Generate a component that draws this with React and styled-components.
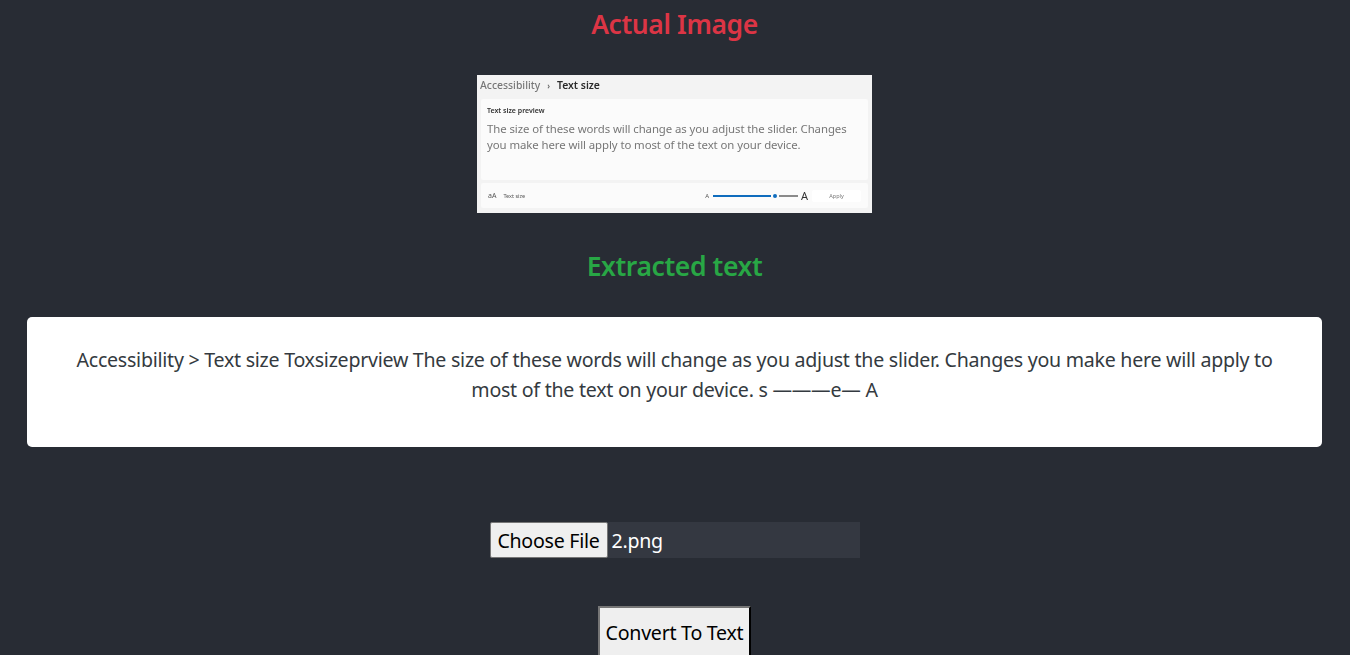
import React from 'react'
import styled, { createGlobalStyle } from 'styled-components'

const GlobalStyle = createGlobalStyle`
  html, body {
    margin: 0;
    height: 100%;
    overflow: hidden;
    background-color: #282c34;
  }
  body {
    font-family: "Noto Sans", "Open Sans", sans-serif;
  }
`

const Page = styled.div`
  width: 1349px;
  height: 655px;
  overflow: hidden;
  display: flex;
  flex-direction: column;
  align-items: center;
  background-color: #282c34;
`

const Heading = styled.h2`
  flex: none;
  margin: ${props => props.$top}px 0 0;
  font-size: 26.5px;
  line-height: 36px;
  font-weight: 600;
  letter-spacing: -0.4px;
  color: ${props => props.$color};
`

const Shot = styled.div`
  flex: none;
  margin-top: 33px;
  width: 395px;
  height: 138px;
  box-sizing: border-box;
  padding: 0 4px 5px 4px;
  display: flex;
  flex-direction: column;
  background-color: #f3f3f3;
  color: #1b1b1b;
  filter: blur(0.35px);
`

const Crumbs = styled.div`
  flex: none;
  height: 24px;
  box-sizing: border-box;
  padding-bottom: 4px;
  display: flex;
  align-items: center;
  gap: 7px;
  margin-left: -1px;
  font-size: 10.4px;
  font-weight: 600;
  color: #2b2b2b;

  span:first-child {
    font-weight: 500;
    color: #777;
  }
  span:nth-child(2) {
    font-size: 8px;
    color: #666;
  }
`

const PreviewCard = styled.div`
  flex: none;
  height: 81px;
  box-sizing: border-box;
  padding: 6px;
  background-color: #fbfbfb;
  border-radius: 2px;
`

const PreviewTitle = styled.div`
  font-size: 7px;
  line-height: 12px;
  font-weight: 600;
  color: #333;
`

const PreviewText = styled.p`
  margin: 4px 0 0;
  font-size: 11.4px;
  line-height: 16px;
  letter-spacing: -0.08px;
  color: #777;
`

const SliderCard = styled.div`
  flex: none;
  margin-top: 3px;
  height: 25px;
  box-sizing: border-box;
  padding: 0 7px 0 7px;
  display: flex;
  align-items: center;
  background-color: #fbfbfb;
  border-radius: 2px;
  font-size: 5.5px;
  color: #555;
`

const SizeGlyph = styled.span`
  font-size: 7px;
  color: #555;
`

const SizeLabel = styled.span`
  margin-left: 7px;
  flex: 1;
`

const SmallA = styled.span`
  font-size: 6px;
  margin-right: 4px;
`

const BigA = styled.span`
  font-size: 11px;
  color: #333;
  margin: 0 4px 0 3px;
`

const Track = styled.div`
  height: 2px;
  width: ${props => props.$width}px;
  background-color: ${props => props.$color};
`

const Thumb = styled.div`
  width: 4px;
  height: 4px;
  margin: 0 2px;
  border-radius: 50%;
  background-color: #0f6cbd;
`

const ApplyButton = styled.div`
  width: 49px;
  height: 12px;
  display: flex;
  align-items: center;
  justify-content: center;
  background-color: #fff;
  border-radius: 2px;
  color: #777;
`

const ResultBox = styled.div`
  flex: none;
  margin-top: 33px;
  width: 1295px;
  height: 130px;
  box-sizing: border-box;
  padding: 28px 48px;
  border-radius: 5px;
  background-color: #fff;
  color: #343a40;
  font-size: 19.6px;
  letter-spacing: -0.26px;
  line-height: 30px;
  text-align: center;
`

const FileRow = styled.div`
  flex: none;
  margin-top: 75px;
  width: 370px;
  height: 36px;
  display: flex;
  align-items: center;
  background-color: #343841;
  color: #fff;
  font-size: 19.6px;
  letter-spacing: -0.26px;
`

const FileButton = styled.button`
  height: 36px;
  width: 118px;
  padding: 0;
  margin-right: 4px;
  box-sizing: border-box;
  border: 1px solid #767676;
  border-radius: 2px;
  background-color: #efefef;
  color: #000;
  font: inherit;
  letter-spacing: inherit;
`

const ConvertButton = styled.button`
  flex: none;
  margin-top: 48px;
  width: 153px;
  height: 52px;
  padding: 0;
  box-sizing: border-box;
  border: 2px solid;
  border-color: #767676 #000 #000 #767676;
  background-color: #efefef;
  color: #000;
  font-size: 19.6px;
  letter-spacing: -0.26px;
  font-family: inherit;
`

const App = () => {
  return (
    <Page>
      <GlobalStyle />
      <Heading $top={6} $color="#dc3545">Actual Image</Heading>
      <Shot>
        <Crumbs>
          <span>Accessibility</span>
          <span>›</span>
          <span>Text size</span>
        </Crumbs>
        <PreviewCard>
          <PreviewTitle>Text size preview</PreviewTitle>
          <PreviewText>
            The size of these words will change as you adjust the slider. Changes
            you make here will apply to most of the text on your device.
          </PreviewText>
        </PreviewCard>
        <SliderCard>
          <SizeGlyph>aA</SizeGlyph>
          <SizeLabel>Text size</SizeLabel>
          <SmallA>A</SmallA>
          <Track $width={58} $color="#0f6cbd" />
          <Thumb />
          <Track $width={19} $color="#8a8a8a" />
          <BigA>A</BigA>
          <ApplyButton>Apply</ApplyButton>
        </SliderCard>
      </Shot>
      <Heading $top={35} $color="#28a745">Extracted text</Heading>
      <ResultBox>
        Accessibility &gt; Text size Toxsizeprview The size of these words will change as you adjust the slider. Changes you make here will apply to most of the text on your device. s ———e— A
      </ResultBox>
      <FileRow>
        <FileButton type="button">Choose File</FileButton>
        <span>2.png</span>
      </FileRow>
      <ConvertButton type="button">Convert To Text</ConvertButton>
    </Page>
  )
}

export default App
